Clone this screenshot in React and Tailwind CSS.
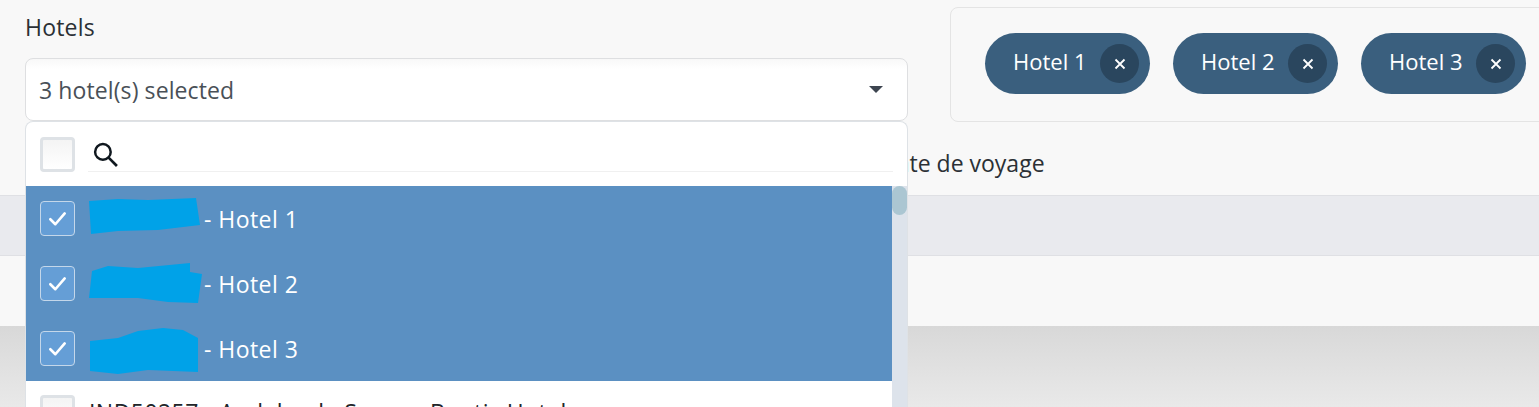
import React from "react";

const hotels = ["Hotel 1", "Hotel 2", "Hotel 3"];

const scribbles = [
  "M1 3 L30 1 L60 2 L108 0 L112 27 L70 32 L30 33 L3 36 Z",
  "M4 8 L20 3 L50 5 L102 0 L102 9 L114 11 L110 40 L80 39 L50 35 L1 35 Z",
  "M2 13 L30 10 L50 3 L75 0 L95 2 L110 10 L110 44 L60 42 L30 46 L2 43 Z",
];

const Check = () => (
  <svg viewBox="0 0 16 16" className="w-[23px] h-[23px]" fill="none" stroke="white" strokeWidth="1.8" strokeLinecap="round" strokeLinejoin="round">
    <path d="M3 8.5 L6.5 12 L13 4.5" />
  </svg>
);

const App = () => {
  return (
    <div className="relative w-[1539px] h-[407px] overflow-hidden font-['Open_Sans','Noto_Sans',sans-serif] text-[#212529]">
      <div className="h-[326px] bg-[#f8f8f8]">
        <div className="flex">
          {/* left column */}
          <div className="w-[950px] shrink-0 pl-[25px] pt-[13px]">
            <div className="text-[23px] leading-[28px] tracking-[0.2px] text-[#2b3035]">Hotels</div>
          </div>
          {/* selected hotels */}
          <div className="w-[620px] h-[115px] shrink-0 mt-[7px] flex items-center gap-[23px] pl-[34px] pb-[3px] border border-[#e4e4e4] rounded-[8px]">
            {hotels.map((h) => (
              <div key={h} className="w-[165px] h-[61px] shrink-0 flex items-center justify-between pl-[28px] pr-[11px] rounded-full bg-[#3a5f7e] text-white">
                <span className="text-[22px] -translate-y-[2px]">{h}</span>
                <span className="w-[39px] h-[39px] rounded-full bg-[#2a465e] flex items-center justify-center">
                  <svg viewBox="0 0 12 12" className="w-[12px] h-[12px] translate-y-px" stroke="white" strokeWidth="1.8">
                    <path d="M1.5 1.5 L10.5 10.5 M10.5 1.5 L1.5 10.5" />
                  </svg>
                </span>
              </div>
            ))}
          </div>
        </div>
        <div className="pl-[880px] pt-[26px] text-[23px] leading-[30px] text-[#2b3035]">Date de voyage</div>
        <div className="mt-[17px] h-[61px] bg-[#e9eaee] border-y border-[#dfe0e4]"></div>
      </div>
      <div className="h-[81px] bg-[linear-gradient(#d8d8d8,#e9e9e9)]"></div>

      {/* select */}
      <div className="absolute left-[25px] top-[58px] w-[883px] h-[63px] flex items-center justify-between pl-[13px] pr-[24px] bg-[linear-gradient(#f8f8f8,#ffffff_10px)] border border-[#dedfe1] rounded-[8px]">
        <span className="text-[23px] tracking-[0.1px] text-[#495057] translate-y-px">3 hotel(s) selected</span>
        <span className="w-0 h-0 border-x-[7px] border-t-[7px] border-x-transparent border-t-[#3d4550]"></span>
      </div>

      {/* dropdown */}
      <div className="absolute left-[25px] top-[121px] w-[883px] h-[300px] bg-white border-x border-t border-[#dee2e6] rounded-t-[8px] overflow-hidden">
        <div className="h-[64px] flex items-start pl-[14px] pt-[15px]">
          <span className="w-[35px] h-[35px] rounded-[4px] border-[3px] border-[#dee2e6] bg-[linear-gradient(#f4f4f4,#ffffff)] shrink-0"></span>
          <div className="ml-[13px] w-[805px] h-[35px] border-b border-[#f0f0f0] flex items-center pl-[4px]">
            <svg viewBox="0 0 26 26" className="w-[27px] h-[27px]" fill="none" stroke="#10181f" strokeWidth="2.4">
              <circle cx="10.5" cy="10.5" r="7.5" />
              <path d="M16 16 L24 24" strokeWidth="2.6" />
            </svg>
          </div>
        </div>
        <div className="flex">
          <div className="w-[866px]">
            {hotels.map((h, i) => (
              <div key={h} className="h-[65px] flex items-center bg-[#5b90c2] text-white pl-[14px]">
                <span className="w-[35px] h-[35px] rounded-[4px] border border-[#c4d7ea] bg-[#659ed6] flex items-center justify-center shrink-0">
                  <Check />
                </span>
                <svg viewBox="0 0 114 46" className="ml-[13px] w-[114px] h-[46px] shrink-0 translate-y-[2px]" fill="#00a2e8">
                  <path d={scribbles[i]} />
                </svg>
                <span className="ml-[2px] text-[23px] tracking-[0.45px] translate-y-px">- {h}</span>
              </div>
            ))}
            <div className="h-[65px] flex items-start pl-[14px] pt-[14px] text-[#212529]">
              <span className="w-[35px] h-[35px] rounded-[4px] border-[3px] border-[#dee2e6] bg-[linear-gradient(#f4f4f4,#ffffff)] shrink-0"></span>
              <span className="ml-[14px] text-[23px] tracking-[0.45px] whitespace-nowrap">IND50257 - Andalou la Sonora Boutic Hotel</span>
            </div>
          </div>
          <div className="w-[15px] bg-[#dde3eb] relative">
            <div className="absolute top-0 left-0 w-[15px] h-[29px] rounded-full bg-[#abc6d2]"></div>
          </div>
        </div>
      </div>
    </div>
  );
};

export default App;
